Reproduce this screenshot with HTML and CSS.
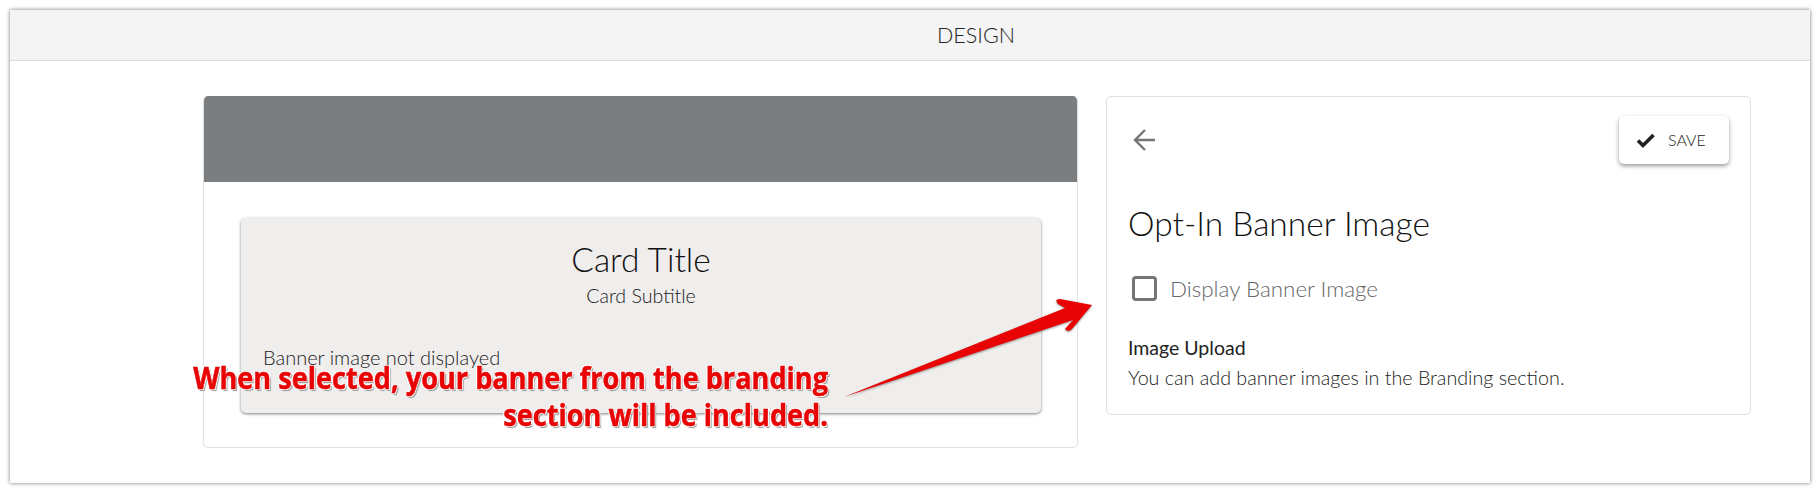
FILE: index.html
```html
<!DOCTYPE html>
<html lang="en">
<head>
  <meta charset="UTF-8" />
  <title>Design</title>
  <link rel="stylesheet" href="styles.css">
</head>
<body>
  <div class="frame">
    <div class="frame-header">DESIGN</div>
    <div class="frame-body">
      <div class="preview">
        <div class="preview-banner"></div>
        <div class="preview-body">
          <div class="inner-card">
            <div class="card-title">Card Title</div>
            <div class="card-subtitle">Card Subtitle</div>
            <div class="banner-note">Banner image not displayed</div>
          </div>
        </div>
      </div>
      <div class="settings">
        <div class="settings-top">
          <svg class="back-icon" width="24" height="24" viewBox="0 0 24 24"><path d="M23 12H3M13 2L3 12l10 10" fill="none" stroke="#757575" stroke-width="2.4"/></svg>
          <button class="save-btn">
            <svg width="20" height="20" viewBox="0 0 20 20"><path d="M2 10.5l5 5L17.5 5" fill="none" stroke="#222" stroke-width="3.6"/></svg>
            <span class="save-label">SAVE</span>
          </button>
        </div>
        <h2 class="settings-title">Opt-In Banner Image</h2>
        <div class="check-row">
          <span class="checkbox"></span>
          <span class="check-label">Display Banner Image</span>
        </div>
        <div class="upload-title">Image Upload</div>
        <div class="upload-text">You can add banner images in the Branding section.</div>
      </div>
    </div>
  </div>

  <!-- annotation drawn over the screenshot -->
  <div class="callout">When selected, your banner from the branding<br>section will be included.</div>
  <svg class="callout-arrow" width="280" height="110" viewBox="0 0 280 110">
    <path d="M2 105L223 16 216 12Q212 7 218 7L250 13 230 37Q226 41 223 37L231 28Z" fill="#e80404"/>
  </svg>
</body>
</html>
```

FILE: styles.css
```css
body {
  margin: 0;
  padding: 10px 10px 9px 10px;
  height: 492px;
  box-sizing: border-box;
  background: #fff;
  font-family: "Lato", sans-serif;
  font-weight: 300;
  color: #222;
  overflow: hidden;
}
.frame {
  height: 473px;
  background: #fff;
  box-shadow: 0 0 4px rgba(0, 0, 0, 0.55);
  display: flex;
  flex-direction: column;
}
.frame-header {
  height: 51px;
  box-sizing: border-box;
  background: #f4f4f4;
  border-bottom: 1px solid #dcdcdc;
  padding-left: 132px;
  display: flex;
  align-items: center;
  justify-content: center;
  font-size: 21.5px;
  color: #222;
}
.frame-body {
  display: flex;
  align-items: flex-start;
  gap: 28px;
  padding: 35px 0 0 193px;
  position: relative;
}
.preview {
  width: 875px;
  height: 352px;
  box-sizing: border-box;
  border: 1px solid #e0e0e0;
  border-top: 0;
  border-radius: 5px;
  overflow: hidden;
}
.preview-banner {
  height: 86px;
  background: #7a7e81;
}
.preview-body {
  padding: 36px 36px 0 37px;
}
.inner-card {
  height: 195px;
  box-sizing: border-box;
  background: #f0eded;
  border-radius: 5px;
  box-shadow: 0 1px 3px rgba(0, 0, 0, 0.5);
  padding: 23px 22px 0 22px;
  text-align: center;
}
.card-title {
  font-size: 33.5px;
  line-height: 36px;
  color: #111;
}
.card-subtitle {
  font-size: 19.6px;
  line-height: 24px;
  margin-top: 7px;
  color: #222;
}
.banner-note {
  text-align: left;
  font-size: 20px;
  line-height: 24px;
  margin-top: 37px;
  color: #222;
}
.settings {
  width: 645px;
  height: 319px;
  box-sizing: border-box;
  border: 1px solid #e0e0e0;
  border-radius: 5px;
  padding: 19px 21px 0 21px;
}
.settings-top {
  display: flex;
  align-items: center;
  justify-content: space-between;
  height: 48px;
}
.back-icon {
  margin-left: 4px;
}
.save-btn {
  width: 110px;
  height: 48px;
  display: flex;
  align-items: center;
  gap: 12px;
  padding: 0 0 0 17px;
  background: #fff;
  border: 0;
  border-radius: 5px;
  box-shadow: 0 2px 4px rgba(0, 0, 0, 0.4);
  font-family: "Lato", sans-serif;
  font-weight: 300;
  font-size: 16px;
  color: #222;
}
.save-label {
  margin-bottom: 2px;
}
.settings-title {
  margin: 41px 0 0 0;
  font-size: 33.5px;
  line-height: 36px;
  font-weight: 300;
  color: #111;
}
.check-row {
  display: flex;
  align-items: center;
  gap: 13px;
  margin: 35px 0 0 4px;
  height: 24px;
}
.checkbox {
  width: 25px;
  height: 25px;
  flex: none;
  box-sizing: border-box;
  border: 3px solid #757575;
  border-radius: 4px;
}
.check-label {
  font-size: 22.4px;
  color: #666;
}
.upload-title {
  margin-top: 37px;
  font-size: 19.5px;
  line-height: 22px;
  font-weight: 400;
}
.upload-text {
  margin-top: 8px;
  font-size: 19.7px;
  line-height: 22px;
  color: #222;
}

/* annotation layer */
.callout {
  position: absolute;
  left: 100px;
  top: 359px;
  width: 728px;
  text-align: right;
  transform: scaleX(0.875);
  transform-origin: right center;
  font-family: "Open Sans", sans-serif;
  font-weight: 700;
  font-size: 31px;
  line-height: 37px;
  white-space: nowrap;
  color: #e80404;
  -webkit-text-stroke: 0.5px #e80404;
  text-shadow: 1px 1px 0 #fff, -1px -1px 0 #fff, 1px -1px 0 #fff, -1px 1px 0 #fff, 2px 2px 1px #999;
}
.callout-arrow {
  position: absolute;
  left: 842px;
  top: 292px;
  filter: drop-shadow(0 1px 1px rgba(0, 0, 0, 0.4));
}
```
